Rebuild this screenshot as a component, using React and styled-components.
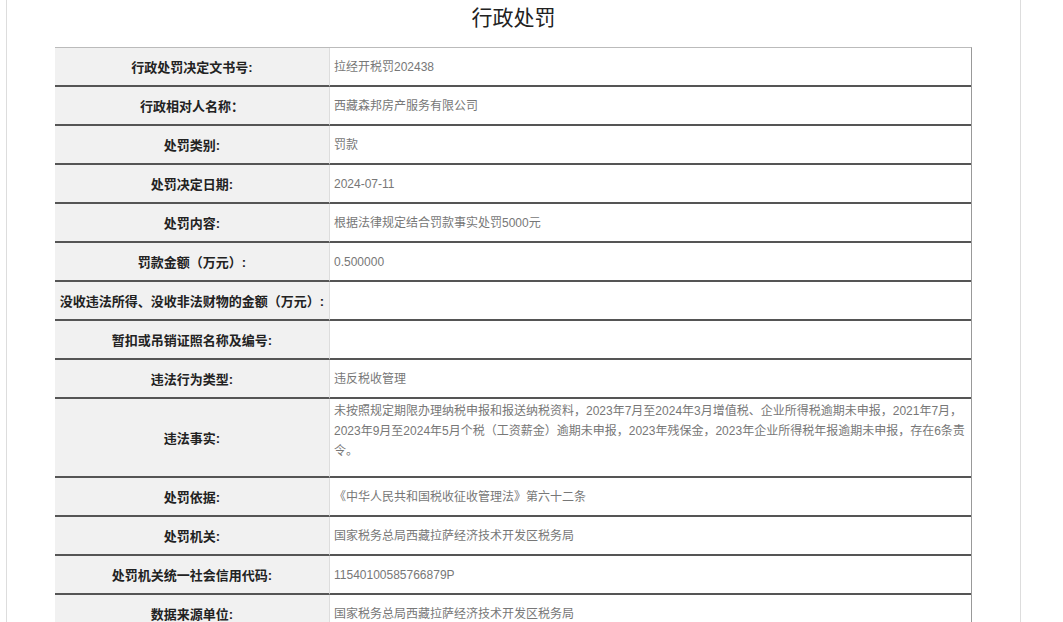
import React from 'react';
import styled, { createGlobalStyle } from 'styled-components';

const Global = createGlobalStyle`
  body { margin: 0; background: #fff; font-family: "Liberation Sans", "Noto Sans CJK SC", sans-serif; }
`;

const Page = styled.div`
  margin: 0 42px 0 6px;
  border-left: 1px solid #ddd;
  border-right: 1px solid #ddd;
  min-height: 622px;
  display: flex;
  flex-direction: column;
  align-items: center;
`;

const Title = styled.h1`
  margin: 4px 0 0;
  height: 43px;
  font-size: 21px;
  font-weight: normal;
  color: #222;
  line-height: 28px;
`;

const Table = styled.div`
  width: 916px;
  display: grid;
  grid-template-columns: 275px 1fr;
  border-top: 1px solid #bbb;
  border-right: 1px solid #999;
`;

const Label = styled.div`
  background: #f1f1f1;
  border-bottom: 2px solid #555;
  border-right: 1px solid #ddd;
  min-height: 37px;
  display: flex;
  align-items: center;
  justify-content: center;
  font-size: 13px;
  font-weight: bold;
  color: #222;
`;

const Value = styled.div`
  border-bottom: 2px solid #555;
  min-height: 37px;
  display: flex;
  align-items: center;
  padding: 0 4px;
  font-size: 12px;
  line-height: 20px;
  color: #777;
`;

const rows = [
  ['行政处罚决定文书号:', '拉经开税罚202438'],
  ['行政相对人名称：', '西藏森邦房产服务有限公司'],
  ['处罚类别:', '罚款'],
  ['处罚决定日期:', '2024-07-11'],
  ['处罚内容:', '根据法律规定结合罚款事实处罚5000元'],
  ['罚款金额（万元）:', '0.500000'],
  ['没收违法所得、没收非法财物的金额（万元）:', ''],
  ['暂扣或吊销证照名称及编号:', ''],
  ['违法行为类型:', '违反税收管理'],
  ['违法事实:', '未按照规定期限办理纳税申报和报送纳税资料，2023年7月至2024年3月增值税、企业所得税逾期未申报，2021年7月，2023年9月至2024年5月个税（工资薪金）逾期未申报，2023年残保金，2023年企业所得税年报逾期未申报，存在6条责令。'],
  ['处罚依据:', '《中华人民共和国税收征收管理法》第六十二条'],
  ['处罚机关:', '国家税务总局西藏拉萨经济技术开发区税务局'],
  ['处罚机关统一社会信用代码:', '11540100585766879P'],
  ['数据来源单位:', '国家税务总局西藏拉萨经济技术开发区税务局'],
];

export default function App() {
  return (
    <>
      <Global />
      <Page>
        <Title>行政处罚</Title>
        <Table>
          {rows.map(([l, v]) => (
            <React.Fragment key={l}>
              <Label>{l}</Label>
              <Value style={v.length > 60 ? { minHeight: 75, alignItems: 'flex-start', paddingTop: 2 } : undefined}>{v}</Value>
            </React.Fragment>
          ))}
        </Table>
      </Page>
    </>
  );
}
